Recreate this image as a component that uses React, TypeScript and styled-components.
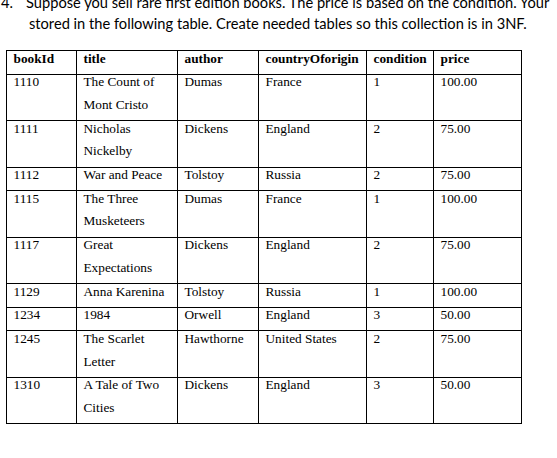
import React from "react";
import styled, { createGlobalStyle } from "styled-components";

const Global = createGlobalStyle`
  html, body { margin: 0; padding: 0; background: #fff; overflow: hidden; }
  body { width: 557px; height: 458px; }
`;

const Page = styled.div`
  width: 557px;
  height: 458px;
  overflow: hidden;
  background: #fff;
`;

const Question = styled.div`
  font-family: Lato, "Liberation Sans", sans-serif;
  font-size: 14.67px;
  line-height: 21px;
  color: #000;
  margin-top: -8px;
  margin-bottom: 16px;
  white-space: nowrap;
  overflow: hidden;
`;

const QLine = styled.div<{ $indent?: number }>`
  padding-left: ${(p) => p.$indent ?? 0}px;
`;

const Num = styled.span`
  display: inline-block;
  width: 26px;
  padding-left: 1px;
  box-sizing: border-box;
`;

const Table = styled.table`
  margin-left: 6px;
  border-collapse: collapse;
  table-layout: fixed;
  width: 515px;
  font-family: "Liberation Serif", "Times New Roman", serif;
  font-size: 13.3px;
  color: #000;
`;

const Cell = styled.td<{ $bold?: boolean }>`
  border: 1px solid #000;
  padding: 0 4px 0 6.5px;
  vertical-align: top;
  text-align: left;
  line-height: 22.7px;
  font-weight: ${(p) => (p.$bold ? 700 : 400)};
  overflow: hidden;
`;

const Text = styled.div`
  margin-top: -3.5px;
  margin-bottom: 3.5px;
`;

const widths = [70, 101, 81, 108, 67, 88];
const headers = ["bookId", "title", "author", "countryOforigin", "condition", "price"];

const rows: [string, string[], string, string, string, string][] = [
  ["1110", ["The Count of", "Mont Cristo"], "Dumas", "France", "1", "100.00"],
  ["1111", ["Nicholas", "Nickelby"], "Dickens", "England", "2", "75.00"],
  ["1112", ["War and Peace"], "Tolstoy", "Russia", "2", "75.00"],
  ["1115", ["The Three", "Musketeers"], "Dumas", "France", "1", "100.00"],
  ["1117", ["Great", "Expectations"], "Dickens", "England", "2", "75.00"],
  ["1129", ["Anna Karenina"], "Tolstoy", "Russia", "1", "100.00"],
  ["1234", ["1984"], "Orwell", "England", "3", "50.00"],
  ["1245", ["The Scarlet", "Letter"], "Hawthorne", "United States", "2", "75.00"],
  ["1310", ["A Tale of Two", "Cities"], "Dickens", "England", "3", "50.00"],
];

export default function App() {
  return (
    <Page>
      <Global />
      <Question>
        <QLine>
          <Num>4.</Num>Suppose you sell rare first edition books. The price is based on the condition. Your
        </QLine>
        <QLine $indent={29}>
          stored in the following table. Create needed tables so this collection is in 3NF.
        </QLine>
      </Question>
      <Table>
        <colgroup>
          {widths.map((w, i) => (
            <col key={i} style={{ width: w }} />
          ))}
        </colgroup>
        <thead>
          <tr>
            {headers.map((h) => (
              <Cell as="th" key={h} $bold>
                <Text>{h}</Text>
              </Cell>
            ))}
          </tr>
        </thead>
        <tbody>
          {rows.map(([id, title, author, country, cond, price]) => (
            <tr key={id}>
              <Cell><Text>{id}</Text></Cell>
              <Cell>
                <Text>
                  {title.map((t, i) => (
                    <div key={i}>{t}</div>
                  ))}
                </Text>
              </Cell>
              <Cell><Text>{author}</Text></Cell>
              <Cell><Text>{country}</Text></Cell>
              <Cell><Text>{cond}</Text></Cell>
              <Cell><Text>{price}</Text></Cell>
            </tr>
          ))}
        </tbody>
      </Table>
    </Page>
  );
}
